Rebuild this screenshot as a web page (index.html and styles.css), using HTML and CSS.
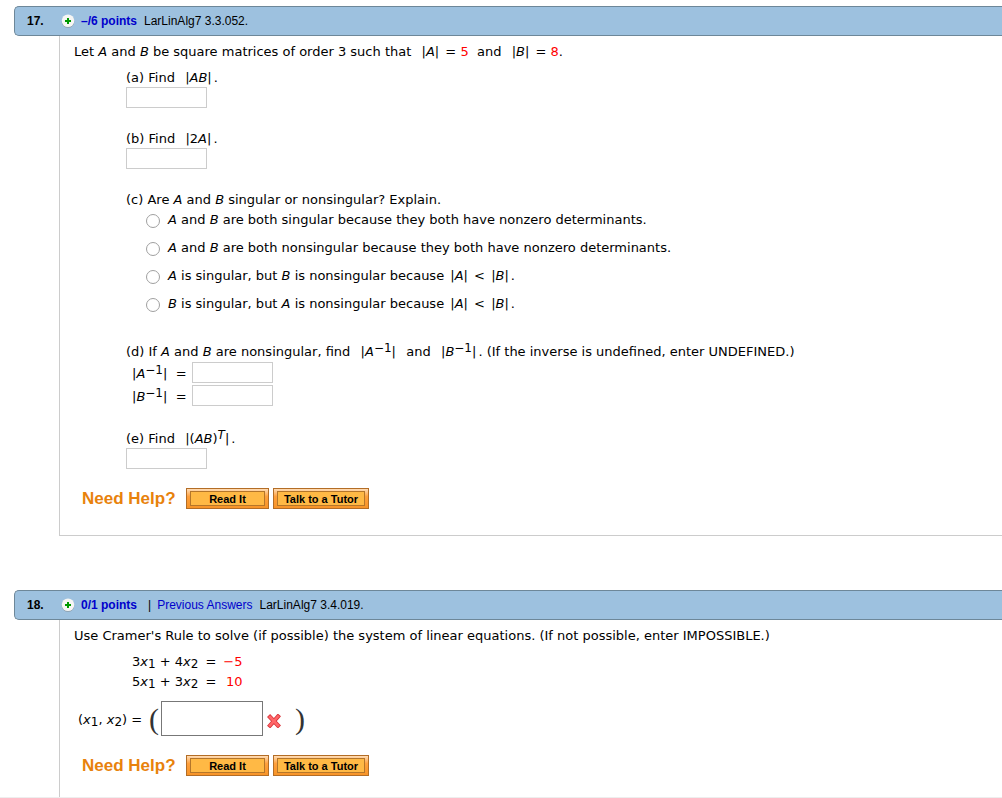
FILE: index.html
```html
<!DOCTYPE html>
<html lang="en">
<head>
    <meta charset="UTF-8">
    <meta name="viewport" content="width=device-width, initial-scale=1.0">
    <title>LarLinAlg7 Assignment</title>
    <link rel="stylesheet" href="styles.css">
</head>
<body>
    <div class="question">
        <div class="question-header">
            <span class="number">17.</span>
            <svg class="plus" viewBox="0 0 14 14">
                <circle cx="7" cy="7.5" r="6.3" fill="#8a9aa6"/>
                <circle cx="7" cy="6.7" r="6.3" fill="#f6f6f4"/>
                <path d="M7 4v6M4 7h6" stroke="#090" stroke-width="2"/>
            </svg>
            <a class="points" href="#">–/6 points</a>
            <span class="source">LarLinAlg7 3.3.052.</span>
        </div>
        <div class="question-body">
            <p>Let <i>A</i> and <i>B</i> be square matrices of order 3 such that &nbsp;<span class="det">|<i>A</i>|</span> = <span class="red">5</span>&nbsp; and &nbsp;<span class="det">|<i>B</i>|</span> = <span class="red">8</span>.</p>
            <div class="parts">
                <div class="part">
                    <label for="part-a">(a) Find &nbsp;<span class="det">|<i>AB</i>|</span>.</label>
                    <input class="answer" type="text" id="part-a">
                </div>
                <div class="part">
                    <label for="part-b">(b) Find &nbsp;<span class="det">|2<i>A</i>|</span>.</label>
                    <input class="answer" type="text" id="part-b">
                </div>
                <div class="part choices-part">
                    <p>(c) Are <i>A</i> and <i>B</i> singular or nonsingular? Explain.</p>
                    <div class="choices">
                        <label><input type="radio" name="part-c"><span><i>A</i> and <i>B</i> are both singular because they both have nonzero determinants.</span></label>
                        <label><input type="radio" name="part-c"><span><i>A</i> and <i>B</i> are both nonsingular because they both have nonzero determinants.</span></label>
                        <label><input type="radio" name="part-c"><span><i>A</i> is singular, but <i>B</i> is nonsingular because <span class="det">|<i>A</i>|</span> &lt; <span class="det">|<i>B</i>|</span>.</span></label>
                        <label><input type="radio" name="part-c"><span><i>B</i> is singular, but <i>A</i> is nonsingular because <span class="det">|<i>A</i>|</span> &lt; <span class="det">|<i>B</i>|</span>.</span></label>
                    </div>
                </div>
                <div class="part inverses-part">
                    <p>(d) If <i>A</i> and <i>B</i> are nonsingular, find &nbsp;<span class="det">|<i>A</i><sup>−1</sup>|</span>&nbsp; and &nbsp;<span class="det">|<i>B</i><sup>−1</sup>|</span>. (If the inverse is undefined, enter UNDEFINED.)</p>
                    <div class="inverses">
                        <label for="inv-a">|<i>A</i><sup>−1</sup>|&nbsp; =</label>
                        <input class="answer" type="text" id="inv-a">
                        <label for="inv-b">|<i>B</i><sup>−1</sup>|&nbsp; =</label>
                        <input class="answer" type="text" id="inv-b">
                    </div>
                </div>
                <div class="part">
                    <label for="part-e">(e) Find &nbsp;<span class="det">|(<i>AB</i>)<sup><i>T</i></sup>|</span>.</label>
                    <input class="answer" type="text" id="part-e">
                </div>
            </div>
            <div class="help">
                <span class="help-title">Need Help?</span>
                <button class="read">Read It</button>
                <button class="tutor">Talk to a Tutor</button>
            </div>
        </div>
    </div>

    <div class="question last">
        <div class="question-header">
            <span class="number">18.</span>
            <svg class="plus" viewBox="0 0 14 14">
                <circle cx="7" cy="7.5" r="6.3" fill="#8a9aa6"/>
                <circle cx="7" cy="6.7" r="6.3" fill="#f6f6f4"/>
                <path d="M7 4v6M4 7h6" stroke="#090" stroke-width="2"/>
            </svg>
            <a class="points" href="#">0/1 points</a>
            <span class="divider">|</span>
            <a class="previous" href="#">Previous Answers</a>
            <span class="source">LarLinAlg7 3.4.019.</span>
        </div>
        <div class="question-body">
            <p>Use Cramer's Rule to solve (if possible) the system of linear equations. (If not possible, enter IMPOSSIBLE.)</p>
            <table class="system">
                <tr><td>3<i>x</i><sub>1</sub> + 4<i>x</i><sub>2</sub></td><td>=</td><td class="red">−5</td></tr>
                <tr><td>5<i>x</i><sub>1</sub> + 3<i>x</i><sub>2</sub></td><td>=</td><td class="red">10</td></tr>
            </table>
            <div class="solution">
                <label for="cramer">(<i>x</i><sub>1</sub>, <i>x</i><sub>2</sub>) =</label>
                <span class="paren">(</span>
                <input class="answer-big" type="text" id="cramer">
                <svg class="wrong" viewBox="0 0 14 14">
                    <path d="M3 3l8 8.500M11 2.500L3 11.500" stroke="#d8343a" stroke-width="4.200" stroke-linecap="square"/>
                    <path d="M3 3l8 8.500M11 2.500L3 11.500" stroke="#ff6668" stroke-width="2.600" stroke-linecap="square"/>
                </svg>
                <span class="paren">)</span>
            </div>
            <div class="help">
                <span class="help-title">Need Help?</span>
                <button class="read">Read It</button>
                <button class="tutor">Talk to a Tutor</button>
            </div>
        </div>
    </div>
</body>
</html>
```
FILE: styles.css
```css
* {
    box-sizing: border-box;
}
body {
    display: flex;
    flex-direction: column;
    min-height: 100vh;
    margin: 0;
    padding: 6px 0 0 14px;
    border-bottom: 1px solid #eee;
    background-color: #fff;
    color: #000;
    font-family: Verdana, 'DejaVu Sans', sans-serif;
    font-size: 13px;
    line-height: 20px;
}
p {
    margin: 0;
}
sup, sub {
    font-size: 12px;
    line-height: 0;
}
sup {
    vertical-align: 4px;
}
sub {
    vertical-align: -2px;
}
.det {
    margin: 0 2px;
}
.red {
    color: #f00;
}
.question {
    display: flex;
    flex-direction: column;
    margin-bottom: 54px;
}
.question.last {
    flex: 1;
    margin-bottom: 0;
}
.question-header {
    display: flex;
    align-items: center;
    height: 30px;
    padding-left: 12px;
    border: 1px solid #6d8799;
    border-right: none;
    border-radius: 5px 0 0 5px;
    background-color: #9dc1df;
    font-family: Arial, 'Liberation Sans', sans-serif;
    font-size: 12px;
}
.question-header a {
    color: #00c;
    text-decoration: none;
}
.number {
    width: 34px;
    font-weight: bold;
}
.plus {
    width: 14px;
    height: 14px;
    margin-right: 6px;
}
.points {
    font-weight: bold;
}
.divider {
    margin: 0 6px 0 11px;
}
.source {
    margin-left: 7px;
}
.question-body {
    margin-left: 45px;
    padding: 6px 0 26px 14px;
    border-left: 1px solid #ccc;
    border-bottom: 1px solid #ccc;
}
.last .question-body {
    flex: 1;
    padding-bottom: 20px;
    border-bottom: none;
}
.parts {
    display: flex;
    flex-direction: column;
    gap: 21px;
    margin: 6px 0 19px 52px;
}
.part > label {
    display: block;
    margin-bottom: -1px;
}
.choices-part {
    margin-bottom: 7px;
}
.inverses-part {
    margin-bottom: 2px;
}
.answer {
    display: block;
    width: 81px;
    height: 21px;
    border: 1px solid #ccc;
    background-color: #fff;
}
.choices {
    display: flex;
    flex-direction: column;
    gap: 8px;
    margin-left: 20px;
}
.choices label {
    display: flex;
    align-items: center;
    gap: 8px;
}
.choices input {
    appearance: none;
    width: 14px;
    height: 14px;
    margin: 2px 0 0;
    border: 1px solid #a0a0a0;
    border-radius: 50%;
    background-color: #fff;
}
.inverses {
    display: grid;
    grid-template-columns: 60px 81px;
    row-gap: 2px;
    margin-left: 6px;
    line-height: 24px;
}
.inverses label {
    height: 21px;
}
.help {
    display: flex;
    align-items: center;
    margin-left: 8px;
}
.help-title {
    width: 104px;
    color: #e8820c;
    font-family: Arial, 'Liberation Sans', sans-serif;
    font-size: 17px;
    font-weight: bold;
}
.help button {
    height: 21px;
    margin-right: 4px;
    padding: 0;
    border: 1px solid #b36d26;
    background: linear-gradient(#ffdcb5, #ffa03c 40%, #f79428);
    font-family: Arial, 'Liberation Sans', sans-serif;
    font-size: 11px;
    font-weight: bold;
    position: relative;
    z-index: 0;
}
.help button::before {
    content: '';
    position: absolute;
    inset: 2px 3px;
    border: 1px solid #b5762a;
    background-color: #ffb945;
    z-index: -1;
}
.help .read {
    width: 83px;
}
.help .tutor {
    width: 96px;
}
.system {
    margin: 6px 0 0 58px;
    border-collapse: collapse;
}
.system td {
    height: 20px;
    padding: 0 7px 0 0;
    line-height: 20px;
    text-align: right;
}
.solution {
    display: flex;
    align-items: center;
    margin: 9px 0 19px 4px;
}
.solution label {
    width: 69px;
    padding-top: 2px;
}
.paren {
    width: 14px;
    color: #333;
    font-family: 'Times New Roman', 'Liberation Serif', serif;
    font-size: 30px;
    text-align: center;
}
.answer-big {
    width: 102px;
    height: 35px;
    border: 1px solid #777;
    background-color: #fff;
}
.wrong {
    width: 14px;
    height: 14px;
    margin: 4px 12px 0 4px;
}
```
